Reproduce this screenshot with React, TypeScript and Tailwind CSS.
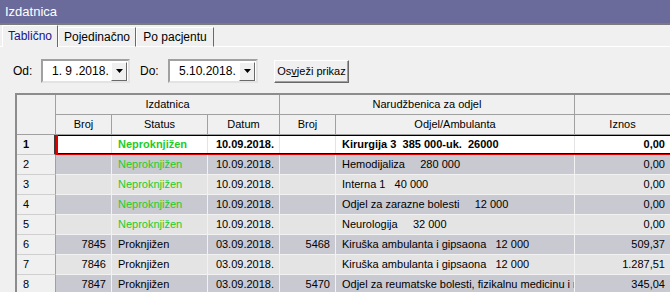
import React from "react";

const rows = [
  { n: 1, broj: "", status: "Neproknjižen", datum: "10.09.2018.", broj2: "", odjel: "Kirurgija 3  385 000-uk.  26000", iznos: "0,00" },
  { n: 2, broj: "", status: "Neproknjižen", datum: "10.09.2018.", broj2: "", odjel: "Hemodijaliza     280 000", iznos: "0,00" },
  { n: 3, broj: "", status: "Neproknjižen", datum: "10.09.2018.", broj2: "", odjel: "Interna 1   40 000", iznos: "0,00" },
  { n: 4, broj: "", status: "Neproknjižen", datum: "10.09.2018.", broj2: "", odjel: "Odjel za zarazne bolesti     12 000", iznos: "0,00" },
  { n: 5, broj: "", status: "Neproknjižen", datum: "10.09.2018.", broj2: "", odjel: "Neurologija     32 000", iznos: "0,00" },
  { n: 6, broj: "7845", status: "Proknjižen", datum: "03.09.2018.", broj2: "5468", odjel: "Kiruška ambulanta i gipsaona   12 000", iznos: "509,37" },
  { n: 7, broj: "7846", status: "Proknjižen", datum: "03.09.2018.", broj2: "", odjel: "Kiruška ambulanta i gipsaona   12 000", iznos: "1.287,51" },
  { n: 8, broj: "7847", status: "Proknjižen", datum: "03.09.2018.", broj2: "5470", odjel: "Odjel za reumatske bolesti, fizikalnu medicinu i re", iznos: "345,04" },
];

const Combo = ({ value, width }: { value: string; width: string }) => (
  <div className={`${width} h-[24px] flex items-center bg-white border-2 border-t-[#a0a0a0] border-l-[#a0a0a0] border-b-[#e3e3e3] border-r-[#e3e3e3]`}>
    <span className="flex-1 pl-[9px] text-[12px] whitespace-pre">{value}</span>
    <div className="w-[16px] h-[19px] mr-px flex items-center justify-center bg-[#f0f0f0] border border-t-white border-l-white border-b-[#696969] border-r-[#696969]">
      <svg width="7" height="4" viewBox="0 0 7 4">
        <polygon points="0,0 7,0 3.5,4" fill="#000" />
      </svg>
    </div>
  </div>
);

const RowData = ({ r, sel }: { r: (typeof rows)[number]; sel: boolean }) => {
  const green = r.status === "Neproknjižen";
  const line = sel ? "border-r border-[#e4e4e4]" : "border-r border-[#f2f2f2]";
  return (
    <>
      <div className={`${sel ? "w-[54px]" : "w-[56px]"} shrink-0 h-full ${line} flex items-center justify-end pr-[5px]`}>{r.broj}</div>
      <div className={`w-[96px] shrink-0 h-full ${line} flex items-center pl-[6px] ${green ? "text-[#1fcc1f]" : ""}`}>{r.status}</div>
      <div className={`w-[72px] shrink-0 h-full ${line} flex items-center justify-end pr-[5px]`}>{r.datum}</div>
      <div className={`w-[56px] shrink-0 h-full ${line} flex items-center justify-end pr-[5px]`}>{r.broj2}</div>
      <div className={`w-[239px] shrink-0 h-full ${line} flex items-center pl-[6px] overflow-hidden whitespace-pre`}>{r.odjel}</div>
      <div className={`w-[96px] shrink-0 h-full ${line} flex items-center justify-end pr-[5px]`}>{r.iznos}</div>
    </>
  );
};

export default function App() {
  return (
    <div className="w-[670px] h-[292px] overflow-hidden bg-[#f0f0f0] text-black font-['Liberation_Sans',Arial,sans-serif]">
      {/* title */}
      <div className="h-[25px] bg-[#6b6b9b] border-b-2 border-[#7b7b7b] flex items-center pl-[5px] text-white text-[13px]">
        Izdatnica
      </div>

      {/* tabs */}
      <div className="h-[22px] flex items-end text-[12px]">
        <div className="w-[2px] h-px bg-white" />
        <div className="w-[56px] h-[22px] flex items-center justify-center border-l border-t border-r border-l-white border-t-white border-r-[#696969] text-[#14148c] pb-[1px]">
          Tablično
        </div>
        <div className="w-[78px] h-[20px] flex items-center justify-center border border-l-white border-t-white border-r-[#696969] border-b-white">
          Pojedinačno
        </div>
        <div className="w-[78px] h-[20px] flex items-center justify-center border border-l-white border-t-white border-r-[#696969] border-b-white">
          Po pacjentu
        </div>
        <div className="flex-1 h-px bg-white" />
      </div>

      {/* filter */}
      <div className="mt-[12px] h-[24px] flex items-center pl-[13px] text-[12px]">
        <span className="w-[28px]">Od:</span>
        <Combo value="1. 9 .2018." width="w-[89px]" />
        <span className="w-[28px] ml-[10px]">Do:</span>
        <Combo value="5.10.2018." width="w-[90px]" />
        <button className="ml-[16px] w-[75px] h-[23px] flex items-center justify-center whitespace-nowrap bg-[#f0f0f0] border border-t-white border-l-white border-b-[#696969] border-r-[#696969] shadow-[inset_-1px_-1px_0_#a0a0a0] text-[11px]">
          Os<span className="underline">v</span>ježi prikaz
        </button>
      </div>

      {/* grid */}
      <div className="mt-[10px] ml-[15px] w-[655px] h-[300px] overflow-hidden border-l-2 border-t-2 border-[#8c8c8c] text-[11px]">
        <div className="w-[700px]">
          {/* header */}
          <div className="flex bg-[#f0f0f0]">
            <div className="w-[39px] h-[40px] shrink-0 border-r border-b border-[#a0a0a0]" />
            <div className="flex flex-col">
              <div className="flex h-[20px]">
                <div className="w-[224px] border-r border-b border-[#a0a0a0] flex items-center justify-center">Izdatnica</div>
                <div className="w-[295px] border-r border-b border-[#a0a0a0] flex items-center justify-center">Narudžbenica za odjel</div>
                <div className="w-[96px] border-r border-b border-[#a0a0a0]" />
              </div>
              <div className="flex h-[20px]">
                <div className="w-[56px] border-r border-b border-[#a0a0a0] flex items-center justify-center">Broj</div>
                <div className="w-[96px] border-r border-b border-[#a0a0a0] flex items-center justify-center">Status</div>
                <div className="w-[72px] border-r border-b border-[#a0a0a0] flex items-center justify-center">Datum</div>
                <div className="w-[56px] border-r border-b border-[#a0a0a0] flex items-center justify-center">Broj</div>
                <div className="w-[239px] border-r border-b border-[#a0a0a0] flex items-center justify-center">Odjel/Ambulanta</div>
                <div className="w-[96px] border-r border-b border-[#a0a0a0] flex items-center justify-center">Iznos</div>
              </div>
            </div>
          </div>

          {/* rows */}
          {rows.map((r) => {
            const sel = r.n === 1;
            if (sel) {
              return (
                <div key={r.n} className="flex h-[20px]">
                  <div className="w-[39px] shrink-0 bg-[#f0f0f0] border-r-2 border-b border-r-[#3a3a3a] border-b-[#c8c8c8] flex items-center pl-[6px] font-bold">
                    1
                  </div>
                  <div className="flex-1 border-l-2 border-b border-[#e00000] bg-white">
                    <div className="flex h-[19px] border-y border-black font-bold">
                      <RowData r={r} sel />
                    </div>
                  </div>
                </div>
              );
            }
            return (
              <div key={r.n} className="flex h-[20px]">
                <div className="w-[39px] shrink-0 bg-[#f0f0f0] border-r border-b border-r-[#a0a0a0] border-b-[#cfcfcf] flex items-center pl-[6px]">
                  {r.n}
                </div>
                <div className={`flex h-full border-b border-[#f2f2f2] ${r.n % 2 === 0 ? "bg-[#c9c9d1]" : "bg-[#e4e4e4]"}`}>
                  <RowData r={r} sel={false} />
                </div>
              </div>
            );
          })}
        </div>
      </div>
    </div>
  );
}
